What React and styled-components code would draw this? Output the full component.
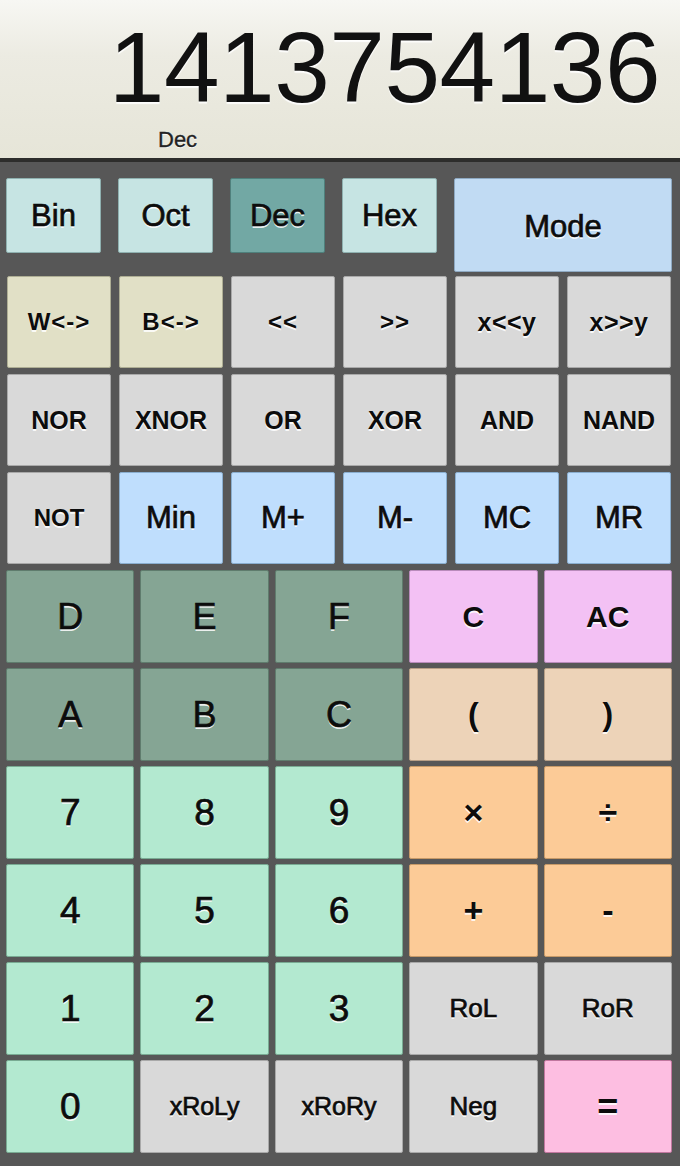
import React from "react";
import styled, { createGlobalStyle, css } from "styled-components";

const GlobalStyle = createGlobalStyle`
  html, body {
    margin: 0;
    padding: 0;
    background: #575757;
  }
  body {
    font-family: "Liberation Sans", Arial, Helvetica, sans-serif;
    -webkit-font-smoothing: antialiased;
  }
  * { box-sizing: border-box; }
`;

const tones = {
  base: { bg: "#c6e4e3", edge: "#8fb1b0" },
  baseOn: { bg: "#72a8a4", edge: "#4f807c" },
  mode: { bg: "#c1dbf3", edge: "#8ea9c2" },
  swap: { bg: "#e1e0c6", edge: "#aeae94" },
  gray: { bg: "#d9d9d9", edge: "#a9a9a9" },
  mem: { bg: "#bfdefd", edge: "#8aaecf" },
  hex: { bg: "#85a594", edge: "#5f7c6d" },
  clear: { bg: "#f3c1f4", edge: "#b98bbb" },
  paren: { bg: "#edd3b8", edge: "#b89f86" },
  op: { bg: "#fccb97", edge: "#c79a68" },
  num: { bg: "#b3e9d0", edge: "#79ab93" },
  eq: { bg: "#fdbee1", edge: "#c1779f" },
};

const Page = styled.div`
  width: 680px;
  min-height: 1166px;
  background: #575757;
`;

const Display = styled.div`
  height: 162px;
  background: linear-gradient(180deg, #f7f7f3 0%, #ecebe2 35%, #e6e5d8 100%);
  border-bottom: 4px solid #2d2d2b;
  overflow: hidden;
`;

const Value = styled.div`
  margin-top: 17px;
  padding-right: 20px;
  font-size: 100px;
  line-height: 100px;
  text-align: right;
  color: #111;
  letter-spacing: -0.5px;
  text-shadow: 0 2px 1px rgba(255, 255, 255, 0.9);
`;

const BaseLabel = styled.div`
  margin-top: 12px;
  padding-left: 158px;
  font-size: 22px;
  line-height: 22px;
  color: #222;
  -webkit-text-stroke: 0.3px #222;
  text-shadow: 0 1px 0 rgba(255, 255, 255, 0.9);
`;

const Keypad = styled.div`
  padding: 16px 8px 13px 6px;
  display: flex;
  flex-direction: column;
`;

const TopRow = styled.div`
  display: flex;
  align-items: flex-start;
  gap: 17px;
`;

const keyLook = css`
  display: flex;
  align-items: center;
  justify-content: center;
  background: ${(p) => tones[p.$tone].bg};
  border: 1.5px solid ${(p) => tones[p.$tone].edge};
  border-radius: 2px;
  color: #0c0c0c;
  font-family: "Liberation Sans", Arial, Helvetica, sans-serif;
  font-size: ${(p) => p.$size || 30}px;
  font-weight: ${(p) => (p.$bold ? 700 : 400)};
  letter-spacing: ${(p) => p.$track || 0}px;
  -webkit-text-stroke: ${(p) => (p.$bold ? 0 : 0.7)}px #0c0c0c;
  text-shadow: 0 1.5px 0.5px rgba(255, 255, 255, 0.85);
  padding: 0;
  cursor: pointer;
`;

const BaseKey = styled.button`
  ${keyLook}
  width: 95px;
  height: 75px;
`;

const ModeKey = styled.button`
  ${keyLook}
  flex: 1;
  height: 94px;
  padding-top: 3px;
`;

const LogicGrid = styled.div`
  margin: 4px 1px 0;
  display: grid;
  grid-template-columns: repeat(6, 1fr);
  grid-auto-rows: 92px;
  gap: 6px 8px;
`;

const NumGrid = styled.div`
  margin-top: 6px;
  display: grid;
  grid-template-columns: repeat(5, 1fr);
  grid-auto-rows: 93px;
  gap: 5px 6px;
`;

const Key = styled.button`
  ${keyLook}
`;

const logicKeys = [
  ["W<->", "swap", 24, true, 1],
  ["B<->", "swap", 24, true, 1],
  ["<<", "gray", 24, true, 1],
  [">>", "gray", 24, true, 1],
  ["x<<y", "gray", 25, true, 0.5],
  ["x>>y", "gray", 25, true, 0.5],
  ["NOR", "gray", 25, true],
  ["XNOR", "gray", 25, true],
  ["OR", "gray", 25, true],
  ["XOR", "gray", 25, true],
  ["AND", "gray", 25, true],
  ["NAND", "gray", 25, true],
  ["NOT", "gray", 24, true],
  ["Min", "mem", 31, false],
  ["M+", "mem", 31, false],
  ["M-", "mem", 31, false],
  ["MC", "mem", 31, false],
  ["MR", "mem", 31, false],
];

const numKeys = [
  ["D", "hex", 36, false],
  ["E", "hex", 36, false],
  ["F", "hex", 36, false],
  ["C", "clear", 30, true],
  ["AC", "clear", 30, true],
  ["A", "hex", 36, false],
  ["B", "hex", 36, false],
  ["C", "hex", 36, false],
  ["(", "paren", 32, true],
  [")", "paren", 32, true],
  ["7", "num", 37, false],
  ["8", "num", 37, false],
  ["9", "num", 37, false],
  ["×", "op", 34, true],
  ["÷", "op", 34, true],
  ["4", "num", 37, false],
  ["5", "num", 37, false],
  ["6", "num", 37, false],
  ["+", "op", 34, true],
  ["-", "op", 34, true],
  ["1", "num", 37, false],
  ["2", "num", 37, false],
  ["3", "num", 37, false],
  ["RoL", "gray", 26, false],
  ["RoR", "gray", 26, false],
  ["0", "num", 37, false],
  ["xRoLy", "gray", 25, false],
  ["xRoRy", "gray", 25, false],
  ["Neg", "gray", 26, false],
  ["=", "eq", 36, true],
];

export default function App() {
  return (
    <Page>
      <GlobalStyle />
      <Display>
        <Value>1413754136</Value>
        <BaseLabel>Dec</BaseLabel>
      </Display>
      <Keypad>
        <TopRow>
          <BaseKey $tone="base" $size={31}>Bin</BaseKey>
          <BaseKey $tone="base" $size={31}>Oct</BaseKey>
          <BaseKey $tone="baseOn" $size={31}>Dec</BaseKey>
          <BaseKey $tone="base" $size={31}>Hex</BaseKey>
          <ModeKey $tone="mode" $size={31}>Mode</ModeKey>
        </TopRow>
        <LogicGrid>
          {logicKeys.map(([label, tone, size, bold, track], i) => (
            <Key key={i} $tone={tone} $size={size} $bold={bold} $track={track}>
              {label}
            </Key>
          ))}
        </LogicGrid>
        <NumGrid>
          {numKeys.map(([label, tone, size, bold], i) => (
            <Key key={i} $tone={tone} $size={size} $bold={bold}>
              {label}
            </Key>
          ))}
        </NumGrid>
      </Keypad>
    </Page>
  );
}
